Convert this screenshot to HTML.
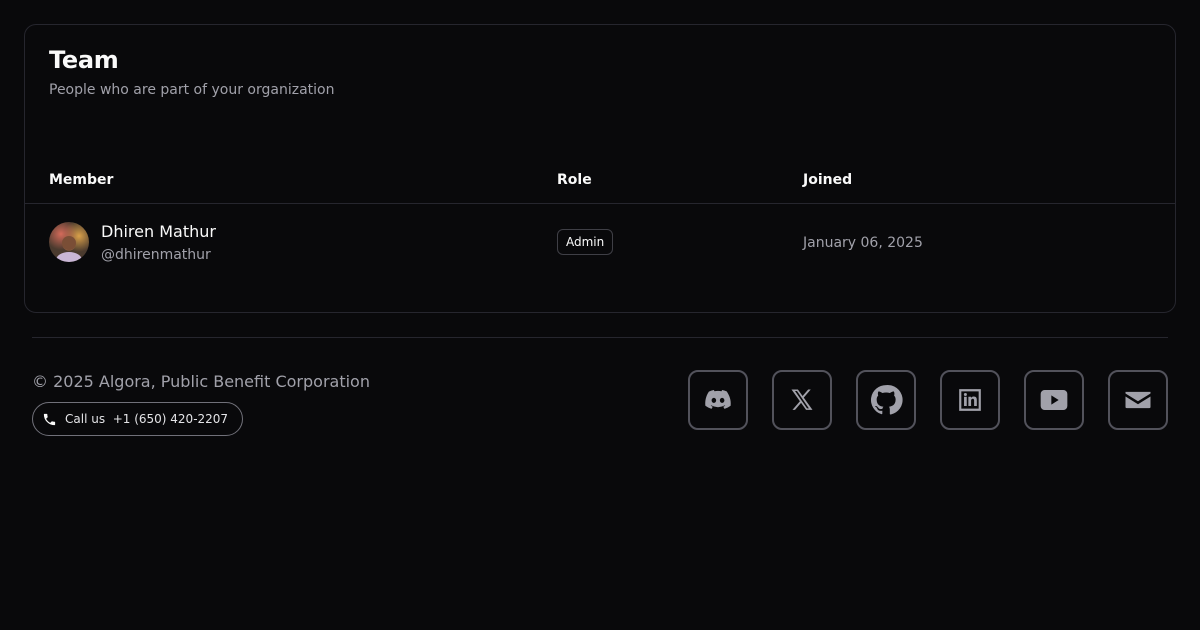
<!DOCTYPE html>
<html><head><meta charset="utf-8"><style>
*{box-sizing:border-box;margin:0;padding:0}
body{width:1200px;height:630px;background:#09090b;font-family:"DejaVu Sans","Liberation Sans",sans-serif;color:#fafafa;position:relative;overflow:hidden}
.card{position:absolute;left:24px;top:24px;width:1152px;height:289px;border:1px solid #26262e;border-radius:12px}
h1{position:absolute;left:24px;top:21px;font-size:24px;font-weight:bold;letter-spacing:-0.3px}
.sub{position:absolute;left:24px;top:57px;font-size:14px;color:#a1a1aa}
.th{position:absolute;top:147px;font-size:14px;font-weight:bold}
.line{position:absolute;left:0;right:0;top:178px;height:1px;background:#26262e}
.av{position:absolute;left:24px;top:197px;width:40px;height:40px;border-radius:50%;overflow:hidden;background:radial-gradient(circle at 50% 55%,#8a5a40 0 22%,transparent 23%),radial-gradient(circle at 30% 30%,#d46b5a,transparent 40%),radial-gradient(circle at 75% 35%,#d9a04a,transparent 40%),#4a3a2e}
.name{position:absolute;left:76px;top:197px;font-size:16px}
.handle{position:absolute;left:76px;top:222px;font-size:14px;color:#a1a1aa}
.badge{position:absolute;left:532px;top:204px;height:26px;padding:0 8px;border:1px solid #3f3f46;border-radius:6px;font-size:12px;line-height:24px}
.date{position:absolute;left:778px;top:210px;font-size:14px;color:#a1a1aa}
.hr{position:absolute;left:32px;width:1136px;top:337px;height:1px;background:#26262e}
.copy{position:absolute;left:32px;top:372px;font-size:16px;color:#a1a1aa}
.call{position:absolute;left:32px;top:402px;width:211px;height:34px;border:1px solid #71717a;border-radius:17px;font-size:12px;color:#e4e4e7;line-height:32px;padding-left:32px}
.call svg{position:absolute;left:9px;top:9px}
.soc{position:absolute;top:370px;width:60px;height:60px;border:2px solid #52525b;border-radius:10px;display:flex;align-items:center;justify-content:center}
.soc svg{fill:#a1a1aa}
</style></head><body>
<div class="card">
<h1>Team</h1>
<div class="sub">People who are part of your organization</div>
<div class="th" style="left:24px">Member</div>
<div class="th" style="left:532px">Role</div>
<div class="th" style="left:778px">Joined</div>
<div class="line"></div>
<div class="av"><svg width="40" height="40"><ellipse cx="20" cy="38" rx="13" ry="8" fill="#c9b6d6"/><circle cx="20" cy="21" r="7" fill="#7a4e36"/></svg></div>
<div class="name">Dhiren Mathur</div>
<div class="handle">@dhirenmathur</div>
<div class="badge">Admin</div>
<div class="date">January 06, 2025</div>
</div>
<div class="hr"></div>
<div class="copy">© 2025 Algora, Public Benefit Corporation</div>
<div class="call"><svg width="15" height="15" viewBox="0 0 24 24" fill="#fafafa"><path d="M6.6 10.8a15 15 0 0 0 6.6 6.6l2.2-2.2c.3-.3.7-.4 1-.2 1.1.4 2.3.6 3.6.6.6 0 1 .4 1 1V20c0 .6-.4 1-1 1A17 17 0 0 1 3 4c0-.6.4-1 1-1h3.5c.6 0 1 .4 1 1 0 1.3.2 2.5.6 3.6.1.3 0 .7-.2 1z"/></svg>Call us&nbsp;&nbsp;+1 (650) 420-2207</div>
<div class="soc" style="left:688px"><svg width="30" height="30" viewBox="0 0 24 24"><path d="M19.3 5.3A16 16 0 0 0 15.3 4l-.5 1a15 15 0 0 0-5.6 0l-.5-1a16 16 0 0 0-4 1.3C2.2 9.1 1.5 12.9 1.9 16.6a16 16 0 0 0 4.9 2.5l1-1.7a10 10 0 0 1-1.6-.8l.4-.3a11.4 11.4 0 0 0 10.8 0l.4.3-1.6.8 1 1.7a16 16 0 0 0 4.9-2.5c.5-4.300-.8-8-3-11.300zM8.7 14.300c-1 0-1.800-.9-1.800-2s.8-2 1.800-2 1.800.9 1.800 2-.8 2-1.800 2zm6.600 0c-1 0-1.800-.9-1.800-2s.8-2 1.800-2 1.800.9 1.800 2-.8 2-1.800 2z"/></svg></div>
<div class="soc" style="left:772px"><svg width="28" height="28" viewBox="0 0 24 24"><path d="M3 3h5.5l4 5.6L17.3 3h2.2l-6 7 7.500 10.500H15.500l-4.300-6-5.200 6H3.800l6.400-7.400zm3 1.300 10.300 14.900h1.600L7.700 4.300z"/></svg></div>
<div class="soc" style="left:856px"><svg width="34" height="34" viewBox="0 0 24 24"><path d="M12 1.5a10.5 10.5 0 0 0-3.3 20.5c.5.1.7-.2.7-.5v-1.900c-2.900.6-3.500-1.300-3.500-1.300-.5-1.200-1.200-1.500-1.200-1.500-1-.6.1-.6.1-.6 1 .1 1.600 1.100 1.600 1.100.9 1.600 2.500 1.100 3.100.9.1-.7.4-1.100.7-1.400-2.300-.3-4.800-1.200-4.800-5.200 0-1.100.4-2.100 1.100-2.800-.1-.3-.5-1.300.1-2.800 0 0 .9-.3 2.900 1.100a10 10 0 0 1 5.200 0c2-1.400 2.900-1.100 2.900-1.100.6 1.500.2 2.500.1 2.800.7.7 1.100 1.700 1.100 2.800 0 4-2.500 4.900-4.800 5.200.4.300.7 1 .7 2v2.900c0 .3.200.6.700.5A10.500 10.500 0 0 0 12 1.500z"/></svg></div>
<div class="soc" style="left:940px"><svg width="26" height="26" viewBox="0 0 24 24"><path d="M2 2h20v20H2zm2 2v16h16V4zm2.500 5h2.500v8.500H6.500zm1.250-3.500a1.400 1.400 0 1 1 0 2.800 1.400 1.400 0 0 1 0-2.800zM10.500 9h2.400v1.200c.4-.8 1.300-1.400 2.600-1.400 2.200 0 2.800 1.400 2.800 3.300v5.400h-2.500v-4.800c0-1-.2-1.900-1.300-1.900s-1.500.8-1.500 1.900v4.800h-2.500z"/></svg></div>
<div class="soc" style="left:1024px"><svg width="32" height="32" viewBox="0 0 24 24"><path d="M5 4.500h14a3 3 0 0 1 3 3v9a3 3 0 0 1-3 3H5a3 3 0 0 1-3-3v-9a3 3 0 0 1 3-3z"/><path d="M10 8.500v7l5.500-3.500z" fill="#09090b"/></svg></div>
<div class="soc" style="left:1108px"><svg width="30" height="30" viewBox="0 0 24 24"><path d="M2 5.500h20v1.300l-10 6.200-10-6.200zm0 3.700 10 6.200 10-6.200v8.300a1 1 0 0 1-1 1H3a1 1 0 0 1-1-1z"/></svg></div>
</body></html>
